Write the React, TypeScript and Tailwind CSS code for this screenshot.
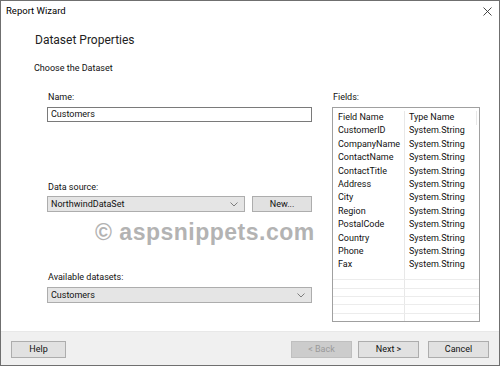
import React from "react"

const fields = [
  "CustomerID",
  "CompanyName",
  "ContactName",
  "ContactTitle",
  "Address",
  "City",
  "Region",
  "PostalCode",
  "Country",
  "Phone",
  "Fax",
]

const Chevron = () => (
  <svg width="8" height="5" viewBox="0 0 8 5" className="shrink-0">
    <polyline points="0.5,0.5 4,4 7.5,0.5" fill="none" stroke="#707070" strokeWidth="0.9" />
  </svg>
)

const Select = ({ value, className }: { value: string; className?: string }) => (
  <div
    className={`h-[16px] flex items-center justify-between pl-[3px] pr-[6px] bg-[#e5e5e5] border border-[#adadad] ${className ?? ""}`}
  >
    <span className="leading-none">{value}</span>
    <Chevron />
  </div>
)

const Button = ({
  children,
  disabled,
  className,
}: {
  children: React.ReactNode
  disabled?: boolean
  className?: string
}) => (
  <div
    className={`h-[17px] flex items-center justify-center border leading-none ${
      disabled
        ? "bg-[#cccccc] border-[#bfbfbf] text-[#9a9a9a]"
        : "bg-[#e1e1e1] border-[#adadad] text-[#111]"
    } ${className ?? ""}`}
  >
    {children}
  </div>
)

export default function App() {
  return (
    <div
      className="w-[500px] h-[368px] bg-white text-[9px] text-[#111]"
      style={{ fontFamily: 'Roboto, "Noto Sans", sans-serif' }}
    >
      <div className="relative h-[366px] border border-[#6f6f6f] flex flex-col">
        {/* title bar */}
        <div className="h-[21px] flex items-center justify-between pl-[5px] pr-[7px]">
          <span className="text-[9.5px] text-black">Report Wizard</span>
          <svg width="9" height="9" viewBox="0 0 9 9">
            <path d="M0.5 0.5 L8.5 8.5 M8.5 0.5 L0.5 8.5" stroke="#333" strokeWidth="0.9" />
          </svg>
        </div>

        {/* body */}
        <div className="flex-1 flex flex-col">
          <div className="pl-[34px] pt-[10px] text-[12px] leading-[16px] text-[#222]">
            Dataset Properties
          </div>
          <div className="pl-[33px] pt-[14px] leading-[12px]">Choose the Dataset</div>

          <div className="flex pt-[17px]">
            {/* left column */}
            <div className="ml-[46px] w-[265px] flex flex-col">
              <div className="pl-[1px] leading-[12px]">Name:</div>
              <div className="mt-[4px] h-[15px] flex items-center pl-[3px] border border-[#7a7a7a] bg-white leading-none">
                Customers
              </div>

              <div className="mt-[59px] pl-[1px] leading-[12px]">Data source:</div>
              <div className="mt-[3px] flex gap-[7px]">
                <Select value="NorthwindDataSet" className="w-[198px]" />
                <div className="w-[60px] h-[16px] flex items-center justify-center bg-[#e1e1e1] border border-[#adadad] leading-none">
                  New...
                </div>
              </div>

              <div className="mt-[59px] pl-[1px] leading-[12px]">Available datasets:</div>
              <Select value="Customers" className="mt-[4px]" />
            </div>

            {/* right column */}
            <div className="ml-[20px] w-[148px] flex flex-col">
              <div className="pl-[1px] leading-[12px]">Fields:</div>
              <div className="mt-[4px] h-[215px] border border-[#a0a0a0] bg-white flex flex-col pt-[3px] overflow-hidden">
                <div className="flex h-[14px] items-center">
                  <div className="w-[72px] pl-[5px] border-r border-[#e8e8e8] h-full flex items-center">
                    Field Name
                  </div>
                  <div className="w-[72px] pl-[4px] border-r border-[#e8e8e8] h-full flex items-center">
                    Type Name
                  </div>
                </div>
                {fields.map((f) => (
                  <div key={f} className="flex h-[13.4px] shrink-0 items-center">
                    <div className="w-[72px] pl-[5px] border-r border-[#e8e8e8] h-full flex items-center">
                      {f}
                    </div>
                    <div className="w-[72px] pl-[4px] h-full flex items-center">System.String</div>
                  </div>
                ))}
                {[0, 1, 2, 3, 4, 5].map((i) => (
                  <div key={i} className="flex h-[8.4px] shrink-0 border-b border-[#ececec]">
                    <div className="w-[72px] border-r border-[#e8e8e8] h-full" />
                    <div className="w-[72px] h-full" />
                  </div>
                ))}
              </div>
            </div>
          </div>

          {/* watermark */}
          <div
            className="absolute left-[94px] top-[217px] text-[23px] font-bold text-[#b3b3b3] leading-[28px] tracking-[0.5px]"
            style={{ fontFamily: '"Liberation Sans", Arial, sans-serif' }}
          >
            © aspsnippets.com
          </div>
        </div>

        {/* footer */}
        <div className="h-[34px] bg-[#f0f0f0] border-t border-[#e8e8e8] flex items-center pl-[10px] pr-[10px] pt-[1px]">
          <Button className="w-[55px]">Help</Button>
          <div className="flex-1" />
          <Button disabled className="w-[61px]">
            &lt; Back
          </Button>
          <Button className="w-[61px] ml-[6px]">Next &gt;</Button>
          <Button className="w-[61px] ml-[9px]">Cancel</Button>
        </div>
      </div>
    </div>
  )
}
